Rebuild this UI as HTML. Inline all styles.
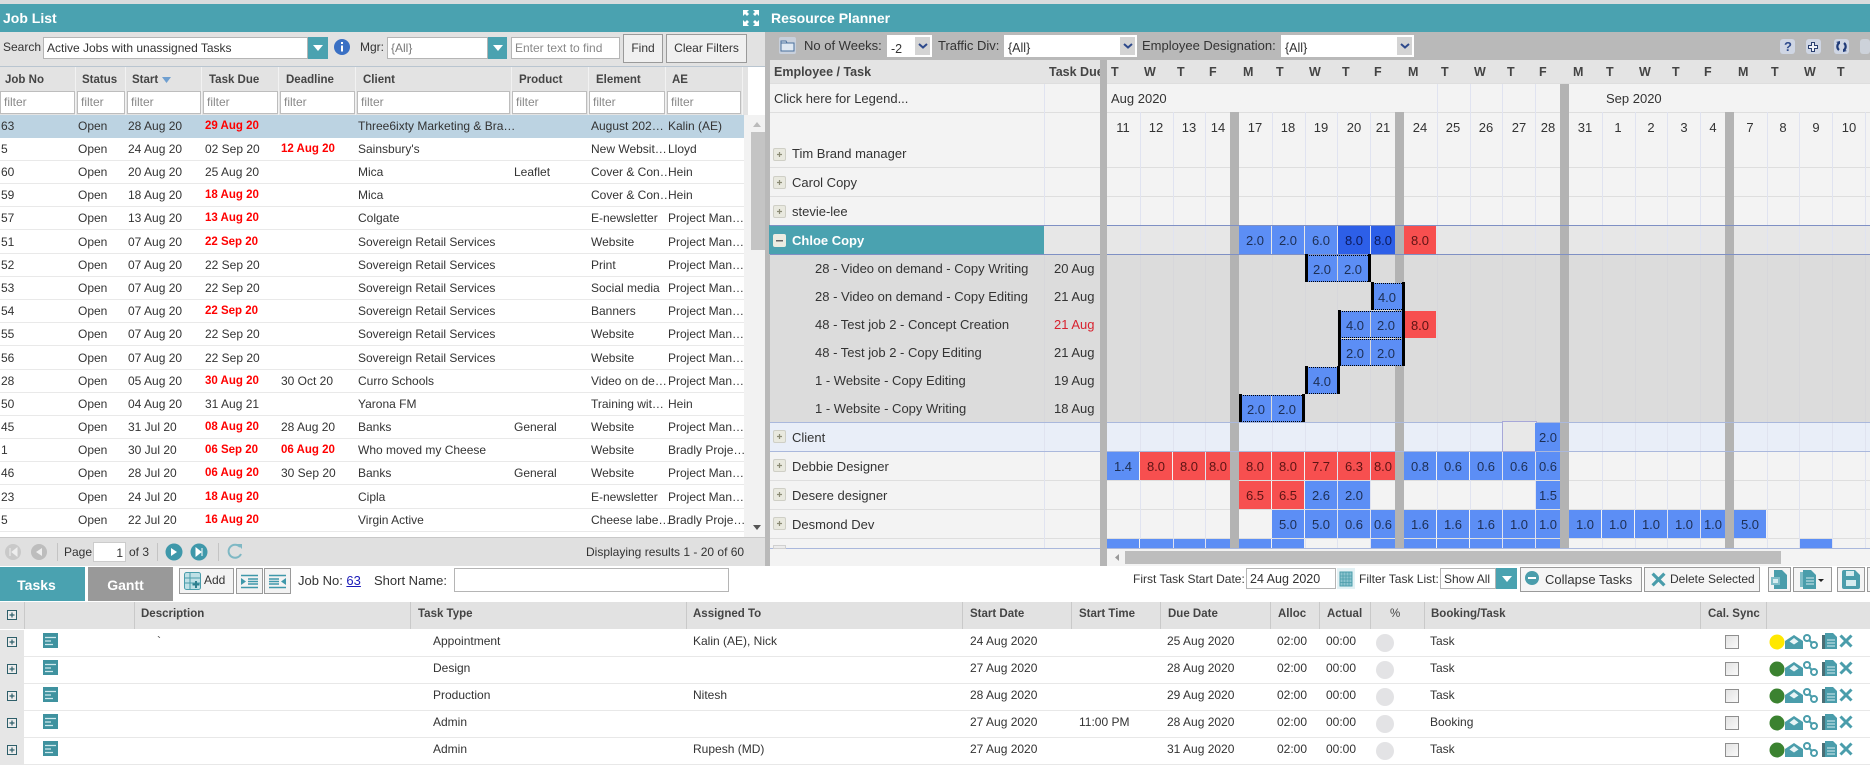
<!DOCTYPE html>
<html lang="en"><head><meta charset="utf-8"><title>Job List / Resource Planner</title>
<style>
html,body{margin:0;padding:0;background:#fff}
body{width:1870px;height:766px;overflow:hidden;position:relative;font:12px "Liberation Sans",sans-serif;color:#333}
.a{position:absolute;white-space:nowrap}
.box{position:absolute;box-sizing:border-box}
.inp{position:absolute;box-sizing:border-box;background:#fff;border:1px solid #b5b5b5;padding-left:3px;line-height:21px;white-space:nowrap;overflow:hidden}
.btn{position:absolute;box-sizing:border-box;background:#f0f0f0;border:1px solid #9a9a9a;text-align:center;white-space:nowrap}
.dd{position:absolute;background:#4aa2b0}
.dd:after{content:"";position:absolute;left:50%;top:50%;margin:-3px 0 0 -5px;border:5px solid transparent;border-top:6px solid #fff;border-bottom:0}
.hd{position:absolute;top:67px;height:24px;line-height:26px;font-size:11.5px;font-weight:bold;color:#444;white-space:nowrap}
.sp{position:absolute;top:67px;height:48px;width:1px;background:#f2f2f2}
.f{position:absolute;top:91px;height:23px;box-sizing:border-box;background:#fff;border:1px solid #bdbdbd;color:#888;padding-left:3px;line-height:21px}
.r{position:absolute;left:0;width:744px;height:22px;line-height:23px;border-bottom:1px solid #e9e9e9;background:#fff}
.r span{position:absolute;top:0;white-space:nowrap}
.r b{position:absolute;top:0;color:#f00;white-space:nowrap;font-size:11.5px}
.n{left:1px}.s{left:78px}.d{left:128px}.u{left:205px}.l{left:281px}.c{left:358px}.p{left:514px}.e{left:591px}.m{left:668px}
.gh{position:absolute;top:602px;height:27px;line-height:24px;font-size:11.5px;font-weight:bold;color:#444;white-space:nowrap}
.gs{position:absolute;top:602px;height:27px;width:1px;background:#c9c9c9}
.gr{position:absolute;left:0;width:1870px;height:26px;border-bottom:1px solid #e8e8e8}
.gr span{position:absolute;top:4px;line-height:14px;white-space:nowrap}
.gr i{position:absolute;left:0;top:0;width:24px;height:27px;background:#e6e6e6}
svg.ic{position:absolute;overflow:visible}
svg text{font-family:"Liberation Sans",sans-serif}
</style></head>
<body>
<svg width="0" height="0" style="position:absolute">
<defs>
<symbol id="plus" viewBox="0 0 10 10"><rect x=".5" y=".5" width="9" height="9" fill="#ececec" stroke="#2e5f6a"/><path d="M5 2.500v5M2.500 5h5" stroke="#2e5f6a" stroke-width="1.200"/></symbol>
<symbol id="pl" viewBox="0 0 13 13"><rect x=".5" y=".5" width="12" height="12" rx="1.500" fill="#e9e9df" stroke="#cfcfc6"/><path d="M6.500 4v5M4 6.500h5" stroke="#8b8b75" stroke-width="1.200"/></symbol>
<symbol id="list" viewBox="0 0 15 15"><rect width="15" height="15" fill="#3f929f"/><path d="M2 4.500h11M2 8h6M2 11.500h8" stroke="#cfe9ed" stroke-width="1.300"/></symbol>
<symbol id="env" viewBox="0 0 18 14"><path d="M0 6L9 0l9 6v8H0z" fill="#4a9dab"/><path d="M4.500 6.500L9 3l4.500 3.500L9 9.500z" fill="#e8f4f6"/></symbol>
<symbol id="lnk" viewBox="0 0 15 15"><circle cx="4" cy="4" r="3" fill="none" stroke="#4a9dab" stroke-width="2"/><circle cx="11" cy="11" r="3" fill="none" stroke="#4a9dab" stroke-width="2"/><path d="M6 6l3 3" stroke="#4a9dab" stroke-width="2"/></symbol>
<symbol id="doc" viewBox="0 0 15 16"><rect x="0" y="2" width="5" height="14" fill="#4a6f76"/><path d="M3 0h8l4 4v12H3z" fill="#4a9dab"/><path d="M5 7h8M5 10h8M5 13h8" stroke="#d5ecef"/></symbol>
<symbol id="xx" viewBox="0 0 14 14"><path d="M1.500 1.500l11 11M12.500 1.500l-11 11" stroke="#4a9dab" stroke-width="3"/></symbol>
</defs>
</svg>

<!-- top bars -->
<div class="box" style="left:0;top:0;width:1870px;height:4px;background:#d9dcdd"></div>
<div class="box" style="left:0;top:4px;width:1870px;height:28px;background:#4aa2b0"></div>
<div class="a" style="left:3px;top:9px;font-size:14px;font-weight:bold;color:#fff;line-height:18px">Job List</div>
<div class="a" style="left:771px;top:9px;font-size:14px;font-weight:bold;color:#fff;line-height:18px">Resource Planner</div>
<svg class="ic" style="left:743px;top:10px" width="16" height="16" viewBox="0 0 16 16"><path d="M0 0h6L4 2l2 2-2 2-2-2-2 2zM16 0h-6l2 2-2 2 2 2 2-2 2 2zM0 16h6l-2-2 2-2-2-2-2 2-2-2zM16 16h-6l2-2-2-2 2-2 2 2 2-2z" fill="#fff"/></svg>

<!-- left toolbar -->
<div class="box" style="left:0;top:32px;width:765px;height:34px;background:#e2e2e2"></div>
<div class="box" style="left:0;top:66px;width:765px;height:1px;background:#b9c5d0"></div>
<div class="a" style="left:3px;top:40px;line-height:14px">Search</div>
<div class="inp" style="left:43px;top:37px;width:265px;height:22px">Active Jobs with unassigned Tasks</div>
<div class="dd" style="left:308px;top:37px;width:20px;height:22px"></div>
<svg class="ic" style="left:334px;top:39px" width="16" height="16"><circle cx="8" cy="8" r="8" fill="#3a70c4"/><rect x="7" y="3" width="2" height="2" fill="#fff"/><rect x="7" y="6.500" width="2" height="6" fill="#fff"/></svg>
<div class="a" style="left:360px;top:40px;line-height:14px">Mgr:</div>
<div class="inp" style="left:387px;top:37px;width:101px;height:22px;color:#777">{All}</div>
<div class="dd" style="left:488px;top:37px;width:19px;height:22px"></div>
<div class="inp" style="left:511px;top:37px;width:109px;height:22px;color:#888">Enter text to find</div>
<div class="btn" style="left:623px;top:34px;width:40px;height:29px;line-height:26px">Find</div>
<div class="btn" style="left:666px;top:34px;width:81px;height:29px;line-height:26px">Clear Filters</div>

<!-- left grid header -->
<div class="box" style="left:0;top:67px;width:748px;height:48px;background:#e3e3e3"></div>
<div class="hd" style="left:5px">Job No</div>
<div class="hd" style="left:82px">Status</div>
<div class="hd" style="left:132px">Start</div>
<svg class="ic" style="left:162px;top:77px" width="9" height="6"><path d="M0 0h9L4.500 6z" fill="#6f9fd0"/></svg>
<div class="hd" style="left:209px">Task Due</div>
<div class="hd" style="left:286px">Deadline</div>
<div class="hd" style="left:363px">Client</div>
<div class="hd" style="left:519px">Product</div>
<div class="hd" style="left:596px">Element</div>
<div class="hd" style="left:672px">AE</div>
<div class="sp" style="left:75px"></div><div class="sp" style="left:125px"></div><div class="sp" style="left:201px"></div><div class="sp" style="left:278px"></div><div class="sp" style="left:355px"></div><div class="sp" style="left:511px"></div><div class="sp" style="left:588px"></div><div class="sp" style="left:665px"></div><div class="sp" style="left:742px"></div>
<div class="f" style="left:0;width:75px">filter</div>
<div class="f" style="left:77px;width:48px">filter</div>
<div class="f" style="left:127px;width:74px">filter</div>
<div class="f" style="left:203px;width:75px">filter</div>
<div class="f" style="left:280px;width:75px">filter</div>
<div class="f" style="left:357px;width:153px">filter</div>
<div class="f" style="left:512px;width:75px">filter</div>
<div class="f" style="left:589px;width:76px">filter</div>
<div class="f" style="left:667px;width:74px">filter</div>

<!-- left rows -->
<div class="r" style="top:115px;background:#bcd3e2;border-color:#bcd3e2"><span class="n">63</span><span class="s">Open</span><span class="d">28 Aug 20</span><b class="u">29 Aug 20</b><span class="c">Three6ixty Marketing &amp; Bra…</span><span class="e">August 202…</span><span class="m">Kalin (AE)</span></div>
<div class="r" style="top:138px"><span class="n">5</span><span class="s">Open</span><span class="d">24 Aug 20</span><span class="u">02 Sep 20</span><b class="l">12 Aug 20</b><span class="c">Sainsbury's</span><span class="e">New Websit…</span><span class="m">Lloyd</span></div>
<div class="r" style="top:161px"><span class="n">60</span><span class="s">Open</span><span class="d">20 Aug 20</span><span class="u">25 Aug 20</span><span class="c">Mica</span><span class="p">Leaflet</span><span class="e">Cover &amp; Con…</span><span class="m">Hein</span></div>
<div class="r" style="top:184px"><span class="n">59</span><span class="s">Open</span><span class="d">18 Aug 20</span><b class="u">18 Aug 20</b><span class="c">Mica</span><span class="e">Cover &amp; Con…</span><span class="m">Hein</span></div>
<div class="r" style="top:207px"><span class="n">57</span><span class="s">Open</span><span class="d">13 Aug 20</span><b class="u">13 Aug 20</b><span class="c">Colgate</span><span class="e">E-newsletter</span><span class="m">Project Man…</span></div>
<div class="r" style="top:231px"><span class="n">51</span><span class="s">Open</span><span class="d">07 Aug 20</span><b class="u">22 Sep 20</b><span class="c">Sovereign Retail Services</span><span class="e">Website</span><span class="m">Project Man…</span></div>
<div class="r" style="top:254px"><span class="n">52</span><span class="s">Open</span><span class="d">07 Aug 20</span><span class="u">22 Sep 20</span><span class="c">Sovereign Retail Services</span><span class="e">Print</span><span class="m">Project Man…</span></div>
<div class="r" style="top:277px"><span class="n">53</span><span class="s">Open</span><span class="d">07 Aug 20</span><span class="u">22 Sep 20</span><span class="c">Sovereign Retail Services</span><span class="e">Social media</span><span class="m">Project Man…</span></div>
<div class="r" style="top:300px"><span class="n">54</span><span class="s">Open</span><span class="d">07 Aug 20</span><b class="u">22 Sep 20</b><span class="c">Sovereign Retail Services</span><span class="e">Banners</span><span class="m">Project Man…</span></div>
<div class="r" style="top:323px"><span class="n">55</span><span class="s">Open</span><span class="d">07 Aug 20</span><span class="u">22 Sep 20</span><span class="c">Sovereign Retail Services</span><span class="e">Website</span><span class="m">Project Man…</span></div>
<div class="r" style="top:347px"><span class="n">56</span><span class="s">Open</span><span class="d">07 Aug 20</span><span class="u">22 Sep 20</span><span class="c">Sovereign Retail Services</span><span class="e">Website</span><span class="m">Project Man…</span></div>
<div class="r" style="top:370px"><span class="n">28</span><span class="s">Open</span><span class="d">05 Aug 20</span><b class="u">30 Aug 20</b><span class="l">30 Oct 20</span><span class="c">Curro Schools</span><span class="e">Video on de…</span><span class="m">Project Man…</span></div>
<div class="r" style="top:393px"><span class="n">50</span><span class="s">Open</span><span class="d">04 Aug 20</span><span class="u">31 Aug 21</span><span class="c">Yarona FM</span><span class="e">Training wit…</span><span class="m">Hein</span></div>
<div class="r" style="top:416px"><span class="n">45</span><span class="s">Open</span><span class="d">31 Jul 20</span><b class="u">08 Aug 20</b><span class="l">28 Aug 20</span><span class="c">Banks</span><span class="p">General</span><span class="e">Website</span><span class="m">Project Man…</span></div>
<div class="r" style="top:439px"><span class="n">1</span><span class="s">Open</span><span class="d">30 Jul 20</span><b class="u">06 Sep 20</b><b class="l">06 Aug 20</b><span class="c">Who moved my Cheese</span><span class="e">Website</span><span class="m">Bradly Proje…</span></div>
<div class="r" style="top:462px"><span class="n">46</span><span class="s">Open</span><span class="d">28 Jul 20</span><b class="u">06 Aug 20</b><span class="l">30 Sep 20</span><span class="c">Banks</span><span class="p">General</span><span class="e">Website</span><span class="m">Project Man…</span></div>
<div class="r" style="top:486px"><span class="n">23</span><span class="s">Open</span><span class="d">24 Jul 20</span><b class="u">18 Aug 20</b><span class="c">Cipla</span><span class="e">E-newsletter</span><span class="m">Project Man…</span></div>
<div class="r" style="top:509px"><span class="n">5</span><span class="s">Open</span><span class="d">22 Jul 20</span><b class="u">16 Aug 20</b><span class="c">Virgin Active</span><span class="e">Cheese labe…</span><span class="m">Bradly Proje…</span></div>

<!-- left scrollbar -->
<div class="box" style="left:744px;top:115px;width:21px;height:422px;background:#f2f2f2"></div>
<div class="box" style="left:751px;top:132px;width:14px;height:118px;background:#c4c4c4"></div>
<svg class="ic" style="left:753px;top:122px" width="8" height="5"><path d="M0 5h8L4 0z" fill="#bbb"/></svg>
<svg class="ic" style="left:753px;top:525px" width="8" height="5"><path d="M0 0h8L4 5z" fill="#555"/></svg>

<!-- pager -->
<div class="box" style="left:0;top:537px;width:765px;height:29px;background:#e0e0e0;border-top:1px solid #c8c8c8"></div>
<svg class="ic" style="left:0;top:537px" width="250" height="29">
<circle cx="13" cy="15" r="8" fill="#c9c9c9"/><path d="M10 11v8M17 11l-5 4 5 4z" fill="#eee" stroke="#eee"/>
<circle cx="39" cy="15" r="8" fill="#bdbdbd"/><path d="M42 11l-6 4 6 4z" fill="#eee"/>
<rect x="57" y="6" width="1" height="18" fill="#c4c4c4"/>
<rect x="157" y="6" width="1" height="18" fill="#c4c4c4"/>
<circle cx="174" cy="15" r="8.500" fill="#3f98aa"/><path d="M171 11l6 4-6 4z" fill="#fff"/>
<circle cx="199" cy="15" r="8.500" fill="#3f98aa"/><path d="M196 11l5 4-5 4zM202 11v8" fill="#fff" stroke="#fff"/>
<rect x="218" y="6" width="1" height="18" fill="#c4c4c4"/>
<path d="M240 10a6.500 6.500 0 1 0 1 7" fill="none" stroke="#7fb8c4" stroke-width="2"/><path d="M237 7l5 0 0 5z" fill="#7fb8c4"/>
</svg>
<div class="a" style="left:64px;top:545px;line-height:14px">Page</div>
<div class="box" style="left:93px;top:542px;width:33px;height:20px;background:#fff;border:1px solid #ccc;text-align:right;padding-right:2px;line-height:20px">1</div>
<div class="a" style="left:129px;top:545px;line-height:14px">of 3</div>
<div class="a" style="left:586px;top:545px;line-height:14px">Displaying results 1 - 20 of 60</div>

<!-- planner -->
<div class="box" style="left:765px;top:32px;width:5px;height:534px;background:#b9b9b9"></div>
<svg class="a" style="left:0;top:0" width="1870" height="766" viewBox="0 0 1870 766">
<rect x="770" y="32" width="1100" height="28" fill="#b9b9b9"/>
<rect x="770" y="60" width="1100" height="24" fill="#e4e4e4"/>
<rect x="770" y="84" width="1100" height="141" fill="#f3f3f3"/>
<rect x="770" y="225" width="1100" height="29" fill="#e7e7e7"/>
<rect x="770" y="254" width="1100" height="168" fill="#dcdcdc"/>
<rect x="770" y="422" width="1100" height="29" fill="#e9eef8"/>
<rect x="770" y="451" width="1100" height="115" fill="#f3f3f3"/>
<!-- horizontal rules -->
<g stroke="#dedede"><path d="M770 83.500H1870M770 112.500H1870M770 167.500H1870M770 196.500H1870M770 480.500H1870M770 509.500H1870M770 538.500H1870"/></g>
<!-- column rules -->
<g stroke="#e0e3f0"><path d="M1140.500 112V225M1173.500 112V225M1205.500 112V225M1272.500 112V225M1305.500 112V225M1337.500 112V225M1370.500 112V225M1437.500 84V225M1470.500 84V225M1502.500 84V225M1535.500 84V225M1602.500 112V225M1635.500 112V225M1667.500 112V225M1700.500 112V225M1767.500 112V225M1799.500 112V225M1832.500 112V225M1865.500 112V225"/>
<path d="M1140.500 225V254M1173.500 225V254M1205.500 225V254M1272.500 225V254M1305.500 225V254M1337.500 225V254M1370.500 225V254M1437.500 225V254M1470.500 225V254M1502.500 225V254M1535.500 225V254M1602.500 225V254M1635.500 225V254M1667.500 225V254M1700.500 225V254M1767.500 225V254M1799.500 225V254M1832.500 225V254M1865.500 225V254"/>
<path d="M1140.500 422V548M1173.500 422V548M1205.500 422V548M1272.500 422V548M1305.500 422V548M1337.500 422V548M1370.500 422V548M1437.500 422V548M1470.500 422V548M1502.500 422V548M1535.500 422V548M1602.500 422V548M1635.500 422V548M1667.500 422V548M1700.500 422V548M1767.500 422V548M1799.500 422V548M1832.500 422V548M1865.500 422V548M1044.500 84V225M1044.500 422V548" />
</g>
<g stroke="#d7d7db"><path d="M1044.500 254V422M1140.500 254V422M1173.500 254V422M1205.500 254V422M1272.500 254V422M1305.500 254V422M1337.500 254V422M1370.500 254V422M1437.500 254V422M1470.500 254V422M1502.500 254V422M1535.500 254V422M1602.500 254V422M1635.500 254V422M1667.500 254V422M1700.500 254V422M1767.500 254V422M1799.500 254V422M1832.500 254V422M1865.500 254V422"/></g>
<!-- chloe name -->
<rect x="769" y="225" width="275" height="29" fill="#4aa2b0"/>
<!-- bars -->
<g fill="#b3b3b3"><rect x="1230" y="112" width="9" height="436"/><rect x="1395" y="112" width="9" height="436"/><rect x="1560" y="84" width="9" height="464"/><rect x="1725" y="112" width="9" height="436"/></g>
<!-- separators -->
<path d="M770 225.500H1870M770 254.500H1870" stroke="#7f90c4"/>
<path d="M770 422.500H1870M770 451.500H1870M770 548.500H1100M1107 548.500H1870" stroke="#aab8dc"/>

<!-- cells -->
<g fill="#5c8ef5">
<rect x="1239" y="226" width="32" height="28"/><rect x="1272" y="226" width="32" height="28"/><rect x="1305" y="226" width="32" height="28"/>
<rect x="1305" y="255" width="32" height="27"/><rect x="1338" y="255" width="32" height="27"/>
<rect x="1371" y="283" width="33" height="27"/>
<rect x="1338" y="311" width="32" height="27"/><rect x="1371" y="311" width="33" height="27"/>
<rect x="1338" y="339" width="32" height="27"/><rect x="1371" y="339" width="33" height="27"/>
<rect x="1305" y="367" width="33" height="27"/>
<rect x="1239" y="395" width="32" height="27"/><rect x="1272" y="395" width="32" height="27"/>
<rect x="1535" y="423" width="25" height="28"/>
<rect x="1107" y="452" width="32" height="28"/>
<rect x="1404" y="452" width="32" height="28"/><rect x="1437" y="452" width="32" height="28"/><rect x="1470" y="452" width="32" height="28"/><rect x="1503" y="452" width="32" height="28"/><rect x="1536" y="452" width="24" height="28"/>
<rect x="1305" y="481" width="32" height="28"/><rect x="1338" y="481" width="32" height="28"/><rect x="1536" y="481" width="24" height="28"/>
<rect x="1272" y="510" width="32" height="28"/><rect x="1305" y="510" width="32" height="28"/><rect x="1338" y="510" width="32" height="28"/><rect x="1371" y="510" width="24" height="28"/>
<rect x="1404" y="510" width="32" height="28"/><rect x="1437" y="510" width="32" height="28"/><rect x="1470" y="510" width="32" height="28"/><rect x="1503" y="510" width="32" height="28"/><rect x="1536" y="510" width="24" height="28"/>
<rect x="1569" y="510" width="32" height="28"/><rect x="1602" y="510" width="32" height="28"/><rect x="1635" y="510" width="32" height="28"/><rect x="1668" y="510" width="32" height="28"/><rect x="1701" y="510" width="24" height="28"/>
<rect x="1734" y="510" width="32" height="28"/>
<rect x="1107" y="539" width="32" height="9"/><rect x="1140" y="539" width="33" height="9"/><rect x="1174" y="539" width="31" height="9"/><rect x="1206" y="539" width="24" height="9"/><rect x="1239" y="539" width="32" height="9"/><rect x="1272" y="539" width="32" height="9"/><rect x="1371" y="539" width="24" height="9"/><rect x="1404" y="539" width="32" height="9"/><rect x="1437" y="539" width="32" height="9"/><rect x="1470" y="539" width="32" height="9"/><rect x="1503" y="539" width="32" height="9"/><rect x="1536" y="539" width="24" height="9"/><rect x="1800" y="539" width="32" height="9"/>
</g>
<g fill="#2d5fe8"><rect x="1338" y="226" width="32" height="28"/><rect x="1371" y="226" width="24" height="28"/></g>
<g fill="#f74f4f">
<rect x="1404" y="226" width="32" height="28"/><rect x="1404" y="311" width="32" height="27"/>
<rect x="1140" y="452" width="32" height="28"/><rect x="1173" y="452" width="32" height="28"/><rect x="1206" y="452" width="24" height="28"/>
<rect x="1239" y="452" width="32" height="28"/><rect x="1272" y="452" width="32" height="28"/><rect x="1305" y="452" width="32" height="28"/><rect x="1338" y="452" width="32" height="28"/><rect x="1371" y="452" width="24" height="28"/>
<rect x="1239" y="481" width="32" height="28"/><rect x="1272" y="481" width="32" height="28"/>
</g>
<rect x="1502.500" y="421.500" width="34" height="30" fill="#e8e8e8" stroke="#a7a7d8"/>
<rect x="1535" y="423" width="25" height="28" fill="#5c8ef5"/>

<!-- black task outlines -->
<g fill="#000">
<rect x="1305" y="254" width="3" height="28"/><rect x="1368" y="254" width="3" height="28"/>
<rect x="1371" y="282" width="3" height="28"/><rect x="1402" y="282" width="3" height="28"/>
<rect x="1338" y="310" width="3" height="56"/><rect x="1402" y="310" width="3" height="56"/>
<rect x="1305" y="366" width="3" height="28"/><rect x="1337" y="366" width="3" height="28"/>
<rect x="1239" y="394" width="3" height="28"/><rect x="1302" y="394" width="3" height="28"/>
</g>
<g stroke="#000" stroke-dasharray="1 1" fill="none">
<path d="M1305 255.500H1370M1305 281.500H1370M1371 283.500H1404M1371 309.500H1404M1338 311.500H1404M1338 337.500H1404M1338 339.500H1404M1338 365.500H1404M1305 367.500H1339M1305 393.500H1339M1239 395.500H1304M1239 421.500H1304"/>
</g>

<!-- toolbar icons -->
<g>
<rect x="779" y="37" width="17" height="17" rx="2" fill="#c8d0dc"/>
<path d="M781 43h13v8h-13zM781 43v-2h5l1 2" fill="#dfe8f2" stroke="#4a6f9c"/>
<rect x="887" y="35" width="45" height="22" fill="#fff"/><rect x="915" y="37" width="15" height="18" fill="#d4d4d4"/>
<path d="M919 44l4 3.500 4-3.500" fill="none" stroke="#2e4a8c" stroke-width="2"/>
<rect x="1004" y="35" width="133" height="22" fill="#fff"/><rect x="1120" y="37" width="15" height="18" fill="#d4d4d4"/>
<path d="M1124 44l4 3.500 4-3.500" fill="none" stroke="#2e4a8c" stroke-width="2"/>
<rect x="1281" y="35" width="133" height="22" fill="#fff"/><rect x="1397" y="37" width="15" height="18" fill="#d4d4d4"/>
<path d="M1401 44l4 3.500 4-3.500" fill="none" stroke="#2e4a8c" stroke-width="2"/>
<rect x="1780" y="39" width="15" height="15" rx="3" fill="#cfd6e4"/>
<rect x="1806" y="39" width="15" height="15" rx="3" fill="#cfd6e4"/>
<path d="M1811.500 42.500h3v3h3v3h-3v3h-3v-3h-3v-3h3z" fill="#eef1f6" stroke="#2a3f70"/>
<rect x="1834" y="39" width="15" height="15" rx="3" fill="#cfd6e4"/>
<path d="M1839 43a4.500 4.500 0 0 0 0 7M1844 43a4.500 4.500 0 0 1 0 7" fill="none" stroke="#1f3a78" stroke-width="2.200"/>
<path d="M1836 42l4-1v3zM1847 51l-4 1v-3z" fill="#1f3a78"/>
<rect x="1860" y="39" width="10" height="15" rx="3" fill="#cdd2da"/>
</g>
<g font-size="13" fill="#333">
<text x="804" y="50">No of Weeks:</text><text x="938" y="50">Traffic Div:</text><text x="1142" y="50">Employee Designation:</text>
</g>
<g font-size="12.500" fill="#333"><text x="891" y="53">-2</text><text x="1008" y="52">{All}</text><text x="1285" y="52">{All}</text></g>
<text x="1784" y="51" font-size="13" font-weight="bold" fill="#2e4a8c">?</text>

<!-- header row -->
<g font-size="12.500" font-weight="bold" fill="#444">
<text x="774" y="76">Employee / Task</text><text x="1049" y="76">Task Due</text>
<text x="1111" y="76">T</text><text x="1144" y="76">W</text><text x="1177" y="76">T</text><text x="1209" y="76">F</text>
<text x="1243" y="76">M</text><text x="1276" y="76">T</text><text x="1309" y="76">W</text><text x="1342" y="76">T</text><text x="1374" y="76">F</text>
<text x="1408" y="76">M</text><text x="1441" y="76">T</text><text x="1474" y="76">W</text><text x="1507" y="76">T</text><text x="1539" y="76">F</text>
<text x="1573" y="76">M</text><text x="1606" y="76">T</text><text x="1639" y="76">W</text><text x="1672" y="76">T</text><text x="1704" y="76">F</text>
<text x="1738" y="76">M</text><text x="1771" y="76">T</text><text x="1804" y="76">W</text><text x="1837" y="76">T</text>
</g>
<rect x="1100" y="60" width="7" height="506" fill="#b5b5b5"/>

<!-- names -->
<g font-size="13" fill="#333">
<text x="774" y="103">Click here for Legend...</text>
<text x="1111" y="103">Aug 2020</text><text x="1606" y="103">Sep 2020</text>
<text x="792" y="158">Tim Brand manager</text><text x="792" y="187">Carol Copy</text><text x="792" y="216">stevie-lee</text>
<text x="792" y="442">Client</text><text x="792" y="471">Debbie Designer</text><text x="792" y="500">Desere designer</text><text x="792" y="529">Desmond Dev</text>
<text x="815" y="273">28 - Video on demand - Copy Writing</text><text x="815" y="301">28 - Video on demand - Copy Editing</text><text x="815" y="329">48 - Test job 2 - Concept Creation</text><text x="815" y="357">48 - Test job 2 - Copy Editing</text><text x="815" y="385">1 - Website - Copy Editing</text><text x="815" y="413">1 - Website - Copy Writing</text>
<text x="1054" y="273">20 Aug</text><text x="1054" y="301">21 Aug</text><text x="1054" y="329" fill="#d8222f">21 Aug</text><text x="1054" y="357">21 Aug</text><text x="1054" y="385">19 Aug</text><text x="1054" y="413">18 Aug</text>
</g>
<text x="792" y="245" font-size="13" font-weight="bold" fill="#fff">Chloe Copy</text>
<use href="#pl" x="773" y="148" width="13" height="13"/><use href="#pl" x="773" y="176" width="13" height="13"/><use href="#pl" x="773" y="205" width="13" height="13"/>
<rect x="773" y="234" width="13" height="13" rx="2" fill="#ecece2"/><rect x="776" y="240" width="7" height="1.500" fill="#666"/>
<use href="#pl" x="773" y="430" width="13" height="13"/><use href="#pl" x="773" y="459" width="13" height="13"/><use href="#pl" x="773" y="488" width="13" height="13"/><use href="#pl" x="773" y="517" width="13" height="13"/>
<rect x="773.500" y="545.500" width="12" height="3" fill="#ececec" stroke="#d0d0d0"/>

<!-- day numbers -->
<g font-size="13" fill="#333" text-anchor="middle">
<text x="1123" y="132">11</text><text x="1156" y="132">12</text><text x="1189" y="132">13</text><text x="1218" y="132">14</text>
<text x="1255" y="132">17</text><text x="1288" y="132">18</text><text x="1321" y="132">19</text><text x="1354" y="132">20</text><text x="1383" y="132">21</text>
<text x="1420" y="132">24</text><text x="1453" y="132">25</text><text x="1486" y="132">26</text><text x="1519" y="132">27</text><text x="1548" y="132">28</text>
<text x="1585" y="132">31</text><text x="1618" y="132">1</text><text x="1651" y="132">2</text><text x="1684" y="132">3</text><text x="1713" y="132">4</text>
<text x="1750" y="132">7</text><text x="1783" y="132">8</text><text x="1816" y="132">9</text><text x="1849" y="132">10</text>
</g>
<!-- cell values -->
<g font-size="13" fill="#1d2f55" text-anchor="middle">
<text x="1255" y="245">2.0</text><text x="1288" y="245">2.0</text><text x="1321" y="245">6.0</text>
<text x="1322" y="274">2.0</text><text x="1353" y="274">2.0</text>
<text x="1387" y="302">4.0</text>
<text x="1355" y="330">4.0</text><text x="1386" y="330">2.0</text>
<text x="1355" y="358">2.0</text><text x="1386" y="358">2.0</text>
<text x="1322" y="386">4.0</text>
<text x="1256" y="414">2.0</text><text x="1287" y="414">2.0</text>
<text x="1548" y="442">2.0</text>
<text x="1123" y="471">1.4</text>
<text x="1420" y="471">0.8</text><text x="1453" y="471">0.6</text><text x="1486" y="471">0.6</text><text x="1519" y="471">0.6</text><text x="1548" y="471">0.6</text>
<text x="1321" y="500">2.6</text><text x="1354" y="500">2.0</text><text x="1548" y="500">1.5</text>
<text x="1288" y="529">5.0</text><text x="1321" y="529">5.0</text><text x="1354" y="529">0.6</text><text x="1383" y="529">0.6</text>
<text x="1420" y="529">1.6</text><text x="1453" y="529">1.6</text><text x="1486" y="529">1.6</text><text x="1519" y="529">1.0</text><text x="1548" y="529">1.0</text>
<text x="1585" y="529">1.0</text><text x="1618" y="529">1.0</text><text x="1651" y="529">1.0</text><text x="1684" y="529">1.0</text><text x="1713" y="529">1.0</text><text x="1750" y="529">5.0</text>
</g>
<g font-size="13" fill="#0c1a5c" text-anchor="middle"><text x="1354" y="245">8.0</text><text x="1383" y="245">8.0</text></g>
<g font-size="13" fill="#5c1414" text-anchor="middle">
<text x="1420" y="245">8.0</text><text x="1420" y="330">8.0</text>
<text x="1156" y="471">8.0</text><text x="1189" y="471">8.0</text><text x="1218" y="471">8.0</text><text x="1255" y="471">8.0</text><text x="1288" y="471">8.0</text><text x="1321" y="471">7.7</text><text x="1354" y="471">6.3</text><text x="1383" y="471">8.0</text>
<text x="1255" y="500">6.5</text><text x="1288" y="500">6.5</text>
</g>
<!-- h scrollbar -->
<rect x="1107" y="549" width="763" height="17" fill="#f3f3f3"/>
<rect x="1125" y="551" width="656" height="13" fill="#bdbdbd"/>
<path d="M1119 554v7l-4-3.500z" fill="#999"/>
</svg>

<!-- bottom pane -->
<div class="box" style="left:0;top:567px;width:85px;height:34px;background:#4aa2b0;color:#fff;font-size:14px;font-weight:bold;text-align:center;line-height:36px;padding-right:12px">Tasks</div>
<div class="box" style="left:88px;top:567px;width:85px;height:34px;background:#999;color:#fff;font-size:14px;font-weight:bold;text-align:center;line-height:36px;padding-right:10px">Gantt</div>
<div class="btn" style="left:179px;top:568px;width:55px;height:26px;line-height:22px;text-align:left;padding-left:24px;background:#f3f3f3">Add</div>
<svg class="ic" style="left:184px;top:572px" width="17" height="18"><rect x=".5" y=".5" width="16" height="17" rx="2" fill="#bfe0e6" stroke="#4a9dab"/><path d="M1 6h15M1 11h15M6 1v16" stroke="#4a9dab"/><path d="M12 9v7M8.500 12.500h7" stroke="#2e7f8e" stroke-width="2"/></svg>
<div class="btn" style="left:236px;top:568px;width:27px;height:26px;background:#f3f3f3"></div>
<svg class="ic" style="left:241px;top:575px" width="17" height="13"><path d="M0 .5h17M0 12.500h17M7 4h10M7 6.500h10M7 9h10" stroke="#3f98aa" stroke-width="1.500"/><path d="M0 3l5 3.500L0 10z" fill="#3f98aa"/></svg>
<div class="btn" style="left:264px;top:568px;width:27px;height:26px;background:#f3f3f3"></div>
<svg class="ic" style="left:269px;top:575px" width="17" height="13"><path d="M0 .5h17M0 12.500h17M0 4h10M0 6.500h10M0 9h10" stroke="#3f98aa" stroke-width="1.500"/><path d="M17 3l-5 3.500 5 3.500z" fill="#3f98aa"/></svg>
<div class="a" style="left:298px;top:574px;line-height:14px;font-size:13px">Job No: <span style="color:#1a1ab8;text-decoration:underline">63</span></div>
<div class="a" style="left:374px;top:574px;line-height:14px;font-size:13px">Short Name:</div>
<div class="box" style="left:454px;top:568px;width:275px;height:24px;background:#fff;border:1px solid #b5b5b5"></div>

<div class="a" style="left:1133px;top:572px;line-height:14px">First Task Start Date:</div>
<div class="inp" style="left:1246px;top:568px;width:90px;height:21px;line-height:20px;font-size:12.500px">24 Aug 2020</div>
<svg class="ic" style="left:1337px;top:568px" width="18" height="21"><rect width="18" height="21" fill="#e3f1f4"/><rect x="3" y="4" width="12" height="14" fill="#8cc4cf" stroke="#4a9dab"/><path d="M3 8h12M6 4v14M9 4v14M12 4v14M3 11h12M3 14.500h12" stroke="#4a9dab" stroke-width=".8"/></svg>
<div class="a" style="left:1359px;top:572px;line-height:14px">Filter Task List:</div>
<div class="inp" style="left:1440px;top:568px;width:56px;height:21px;line-height:20px">Show All</div>
<div class="dd" style="left:1496px;top:568px;width:21px;height:21px"></div>
<div class="btn" style="left:1520px;top:567px;width:122px;height:25px;line-height:24px;text-align:left;padding-left:24px;font-size:13px;background:#f5f5f5">Collapse Tasks</div>
<svg class="ic" style="left:1525px;top:571px" width="14" height="14"><circle cx="7" cy="7" r="7" fill="#4a9dab"/><rect x="3" y="6" width="8" height="2" fill="#fff"/></svg>
<div class="btn" style="left:1644px;top:567px;width:116px;height:25px;line-height:23px;text-align:left;padding-left:25px;background:#f5f5f5">Delete Selected</div>
<svg class="ic" style="left:1651px;top:572px" width="15" height="15"><use href="#xx" width="15" height="15"/></svg>
<div class="btn" style="left:1768px;top:567px;width:23px;height:25px;background:#f5f5f5"></div>
<svg class="ic" style="left:1771px;top:570px" width="16" height="19"><path d="M3 0h8l5 5v14H3z" fill="#4a9dab"/><rect x="0" y="7" width="9" height="8" fill="#7fbcc7"/><rect x="2" y="9" width="5" height="4" fill="#d5ecef"/></svg>
<div class="btn" style="left:1793px;top:567px;width:39px;height:25px;background:#f5f5f5"></div>
<svg class="ic" style="left:1800px;top:570px" width="24" height="19"><path d="M3 0h8l5 5v14H3z" fill="#4a9dab"/><rect x="0" y="2" width="3" height="15" fill="#7fbcc7"/><path d="M6 8h8M6 11h8M6 14h8" stroke="#d5ecef"/><path d="M18 9h6l-3 3z" fill="#222"/></svg>
<div class="btn" style="left:1837px;top:567px;width:28px;height:25px;background:#f5f5f5"></div>
<svg class="ic" style="left:1842px;top:570px" width="18" height="19"><path d="M2 0h11l5 5v12a2 2 0 0 1-2 2H2a2 2 0 0 1-2-2V2a2 2 0 0 1 2-2z" fill="#4a9dab"/><rect x="4" y="1" width="8" height="5" fill="#d5ecef"/><rect x="4" y="10" width="10" height="6" fill="#d5ecef"/></svg>
<div class="btn" style="left:1867px;top:567px;width:10px;height:25px;background:#f5f5f5"></div>

<!-- bottom grid header -->
<div class="box" style="left:0;top:602px;width:1870px;height:27px;background:#e2e2e2"></div>
<div class="gs" style="left:24px"></div><div class="gs" style="left:134px"></div><div class="gs" style="left:410px"></div><div class="gs" style="left:686px"></div><div class="gs" style="left:962px"></div><div class="gs" style="left:1071px"></div><div class="gs" style="left:1160px"></div><div class="gs" style="left:1270px"></div><div class="gs" style="left:1319px"></div><div class="gs" style="left:1370px"></div><div class="gs" style="left:1424px"></div><div class="gs" style="left:1700px"></div><div class="gs" style="left:1766px"></div>
<svg class="ic" style="left:7px;top:610px" width="10" height="10"><use href="#plus" width="10" height="10"/></svg>
<div class="gh" style="left:141px">Description</div>
<div class="gh" style="left:418px">Task Type</div>
<div class="gh" style="left:693px">Assigned To</div>
<div class="gh" style="left:970px">Start Date</div>
<div class="gh" style="left:1079px">Start Time</div>
<div class="gh" style="left:1168px">Due Date</div>
<div class="gh" style="left:1278px">Alloc</div>
<div class="gh" style="left:1327px">Actual</div>
<div class="gh" style="left:1390px;font-weight:normal">%</div>
<div class="gh" style="left:1431px">Booking/Task</div>
<div class="gh" style="left:1708px">Cal. Sync</div>

<!-- bottom rows -->
<div class="gr" style="top:630px"><i></i><span style="left:157px">`</span><span style="left:433px">Appointment</span><span style="left:693px">Kalin (AE), Nick</span><span style="left:970px">24 Aug 2020</span><span style="left:1167px">25 Aug 2020</span><span style="left:1277px">02:00</span><span style="left:1326px">00:00</span><span style="left:1430px">Task</span></div>
<div class="gr" style="top:657px"><i></i><span style="left:433px">Design</span><span style="left:970px">27 Aug 2020</span><span style="left:1167px">28 Aug 2020</span><span style="left:1277px">02:00</span><span style="left:1326px">00:00</span><span style="left:1430px">Task</span></div>
<div class="gr" style="top:684px"><i></i><span style="left:433px">Production</span><span style="left:693px">Nitesh</span><span style="left:970px">28 Aug 2020</span><span style="left:1167px">29 Aug 2020</span><span style="left:1277px">02:00</span><span style="left:1326px">00:00</span><span style="left:1430px">Task</span></div>
<div class="gr" style="top:711px"><i></i><span style="left:433px">Admin</span><span style="left:970px">27 Aug 2020</span><span style="left:1079px">11:00 PM</span><span style="left:1167px">28 Aug 2020</span><span style="left:1277px">02:00</span><span style="left:1326px">00:00</span><span style="left:1430px">Booking</span></div>
<div class="gr" style="top:738px"><i></i><span style="left:433px">Admin</span><span style="left:693px">Rupesh (MD)</span><span style="left:970px">27 Aug 2020</span><span style="left:1167px">31 Aug 2020</span><span style="left:1277px">02:00</span><span style="left:1326px">00:00</span><span style="left:1430px">Task</span></div>

<!-- bottom row icons -->
<svg class="a" style="left:0;top:0;pointer-events:none" width="1870" height="766" viewBox="0 0 1870 766">
<defs><linearGradient id="cb" x1="0" y1="0" x2="1" y2="1"><stop offset="0" stop-color="#e2e2e2"/><stop offset="1" stop-color="#fafafa"/></linearGradient></defs>
<g>
<use href="#plus" x="7" y="637" width="10" height="10"/><use href="#list" x="43" y="633" width="15" height="15"/>
<circle cx="1385" cy="643" r="9" fill="#e3e3e5"/><rect x="1725.500" y="635.500" width="13" height="13" fill="url(#cb)" stroke="#8f8f8f"/>
<circle cx="1777" cy="642" r="7.500" fill="#ffe800"/><use href="#env" x="1785" y="635" width="18" height="14"/><use href="#lnk" x="1803" y="634" width="15" height="15"/><use href="#doc" x="1822" y="633" width="15" height="16"/><use href="#xx" x="1839" y="634" width="14" height="14"/>
</g>
<g>
<use href="#plus" x="7" y="664" width="10" height="10"/><use href="#list" x="43" y="660" width="15" height="15"/>
<circle cx="1385" cy="670" r="9" fill="#e3e3e5"/><rect x="1725.500" y="662.500" width="13" height="13" fill="url(#cb)" stroke="#8f8f8f"/>
<circle cx="1777" cy="669" r="7.500" fill="#3b8230"/><use href="#env" x="1785" y="662" width="18" height="14"/><use href="#lnk" x="1803" y="661" width="15" height="15"/><use href="#doc" x="1822" y="660" width="15" height="16"/><use href="#xx" x="1839" y="661" width="14" height="14"/>
</g>
<g>
<use href="#plus" x="7" y="691" width="10" height="10"/><use href="#list" x="43" y="687" width="15" height="15"/>
<circle cx="1385" cy="697" r="9" fill="#e3e3e5"/><rect x="1725.500" y="689.500" width="13" height="13" fill="url(#cb)" stroke="#8f8f8f"/>
<circle cx="1777" cy="696" r="7.500" fill="#3b8230"/><use href="#env" x="1785" y="689" width="18" height="14"/><use href="#lnk" x="1803" y="688" width="15" height="15"/><use href="#doc" x="1822" y="687" width="15" height="16"/><use href="#xx" x="1839" y="688" width="14" height="14"/>
</g>
<g>
<use href="#plus" x="7" y="718" width="10" height="10"/><use href="#list" x="43" y="714" width="15" height="15"/>
<circle cx="1385" cy="724" r="9" fill="#e3e3e5"/><rect x="1725.500" y="716.500" width="13" height="13" fill="url(#cb)" stroke="#8f8f8f"/>
<circle cx="1777" cy="723" r="7.500" fill="#3b8230"/><use href="#env" x="1785" y="716" width="18" height="14"/><use href="#lnk" x="1803" y="715" width="15" height="15"/><use href="#doc" x="1822" y="714" width="15" height="16"/><use href="#xx" x="1839" y="715" width="14" height="14"/>
</g>
<g>
<use href="#plus" x="7" y="745" width="10" height="10"/><use href="#list" x="43" y="741" width="15" height="15"/>
<circle cx="1385" cy="751" r="9" fill="#e3e3e5"/><rect x="1725.500" y="743.500" width="13" height="13" fill="url(#cb)" stroke="#8f8f8f"/>
<circle cx="1777" cy="750" r="7.500" fill="#3b8230"/><use href="#env" x="1785" y="743" width="18" height="14"/><use href="#lnk" x="1803" y="742" width="15" height="15"/><use href="#doc" x="1822" y="741" width="15" height="16"/><use href="#xx" x="1839" y="742" width="14" height="14"/>
</g>
</svg>
</body></html>
